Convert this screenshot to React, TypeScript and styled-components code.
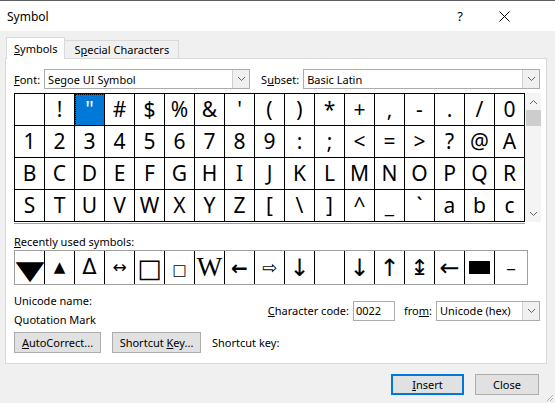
import styled, { createGlobalStyle } from 'styled-components';

const GlobalStyle = createGlobalStyle`
  html, body {
    margin: 0;
    padding: 0;
  }
  body {
    background: #f0f0f0;
    font-family: "Segoe UI", "Noto Sans", sans-serif;
    font-size: 11px;
    color: #000;
  }
`;

const Window = styled.div`
  position: relative;
  width: 555px;
  height: 403px;
  box-sizing: border-box;
  border-top: 1px solid #5f5f5f;
  background: #f0f0f0;
  display: flex;
  flex-direction: column;
  overflow: hidden;
`;

const TitleBar = styled.div`
  height: 30px;
  flex-shrink: 0;
  background: #fff;
  display: flex;
  align-items: center;
  padding-left: 7px;
  padding-right: 28px;
`;

const Title = styled.div`
  flex: 1;
  font-size: 12px;
`;

const TitleButton = styled.div<{ $w: number }>`
  width: ${(p) => p.$w}px;
  height: 30px;
  display: flex;
  align-items: center;
  justify-content: center;
  font-size: 13px;
`;

const Body = styled.div`
  display: flex;
  flex-direction: column;
  padding: 7px 8px 0 5px;
`;

const TabRow = styled.div`
  display: flex;
  align-items: flex-end;
  height: 21px;
  margin-bottom: -1px;
  position: relative;
  z-index: 1;
`;

const Tab = styled.div<{ $active?: boolean }>`
  box-sizing: border-box;
  height: ${(p) => (p.$active ? 22 : 19)}px;
  padding: 0 ${(p) => (p.$active ? 7 : 9)}px;
  display: flex;
  align-items: center;
  background: ${(p) => (p.$active ? '#fff' : '#f0f0f0')};
  border: 1px solid #d9d9d9;
  border-bottom: ${(p) => (p.$active ? 'none' : '1px solid #d9d9d9')};
  border-left: ${(p) => (p.$active ? '1px solid #d9d9d9' : 'none')};
  margin-left: ${(p) => (p.$active ? 1 : 0)}px;
`;

const Panel = styled.div`
  background: #fff;
  border: 1px solid #d9d9d9;
  padding: 10px 6px 10px 8px;
  display: flex;
  flex-direction: column;
`;

const FieldRow = styled.div`
  display: flex;
  align-items: center;
  height: 20px;
`;

const Label = styled.span<{ $lead?: number }>`
  margin-right: 4px;
  margin-left: ${(p) => p.$lead ?? 0}px;
  white-space: nowrap;
`;

const Key = styled.u`
  text-decoration: underline;
  text-underline-offset: 1px;
`;

const Select = styled.div<{ $w: number }>`
  box-sizing: border-box;
  width: ${(p) => p.$w}px;
  height: 20px;
  border: 1px solid #acacac;
  background: #fff;
  display: flex;
  align-items: stretch;
`;

const SelectText = styled.div`
  flex: 1;
  display: flex;
  align-items: center;
  padding-left: 3px;
`;

const SelectButton = styled.div`
  width: 16px;
  border-left: 1px solid #cfcfcf;
  background: #f0f0f0;
  display: flex;
  align-items: center;
  justify-content: center;
`;

const GridArea = styled.div`
  display: flex;
  margin-top: 4px;
`;

const GridFrame = styled.div`
  border-bottom: 1px solid #a0a0a0;
  padding-bottom: 1px;
`;

const Grid = styled.div`
  display: grid;
  grid-template-columns: repeat(17, 30px);
  grid-auto-rows: 32px;
  border-top: 1px solid #000;
  border-left: 1px solid #000;
`;

const Cell = styled.div<{ $selected?: boolean }>`
  box-sizing: border-box;
  border-right: 1px solid #000;
  border-bottom: 1px solid #000;
  display: flex;
  align-items: center;
  justify-content: center;
  font-family: "Segoe UI Symbol", "Noto Sans", "DejaVu Sans", sans-serif;
  font-size: 21px;
  line-height: 1;
  background: ${(p) => (p.$selected ? '#0078d7' : '#fff')};
  color: ${(p) => (p.$selected ? '#fff' : '#000')};
  outline: ${(p) => (p.$selected ? '1px dotted #000' : 'none')};
  outline-offset: -1px;
`;

const Scrollbar = styled.div`
  width: 16px;
  height: 129px;
  background: #f4f4f4;
  display: flex;
  flex-direction: column;
  align-items: center;
`;

const ScrollArrow = styled.div`
  width: 16px;
  height: 17px;
  display: flex;
  align-items: center;
  justify-content: center;
`;

const ScrollTrack = styled.div`
  flex: 1;
  width: 15px;
  margin-left: 1px;
`;

const Thumb = styled.div`
  height: 16px;
  background: #cdcdcd;
`;

const SectionLabel = styled.div`
  margin-top: 9px;
  height: 17px;
  line-height: 17px;
`;

const RecentRow = styled.div`
  display: flex;
  width: 514px;
  height: 35px;
  box-sizing: border-box;
  border: 1px solid #a0a0a0;
`;

const RecentCell = styled.div<{ $size: number; $serif?: boolean; $bold?: boolean; $shift?: number }>`
  box-sizing: border-box;
  width: 30px;
  flex-shrink: 0;
  border-right: 1px solid #000;
  display: flex;
  align-items: center;
  justify-content: center;
  font-family: ${(p) => (p.$serif ? '"Liberation Serif", serif' : '"DejaVu Sans", sans-serif')};
  font-weight: ${(p) => (p.$bold ? 700 : 400)};
  font-size: ${(p) => p.$size}px;
  line-height: 1;
  padding-top: ${(p) => p.$shift ?? 0}px;
  &:last-child {
    flex: 1;
    border-right: none;
  }
`;

const WideGlyph = styled.span<{ $sx: number }>`
  display: inline-block;
  transform: scaleX(${(p) => p.$sx});
`;

const BlockGlyph = styled.span`
  display: block;
  width: 21px;
  height: 13px;
  background: #000;
`;

const InfoRow = styled.div`
  display: flex;
  align-items: center;
  margin-top: 8px;
`;

const InfoText = styled.div`
  display: flex;
  flex-direction: column;
  gap: 3px;
  line-height: 16px;
`;

const CodeGroup = styled.div`
  margin-left: auto;
  display: flex;
  align-items: center;
`;

const Input = styled.div`
  box-sizing: border-box;
  width: 42px;
  height: 20px;
  border: 1px solid #acacac;
  background: #fff;
  display: flex;
  align-items: center;
  padding-left: 2px;
  margin-right: 9px;
`;

const ButtonRow = styled.div`
  display: flex;
  align-items: center;
  gap: 11px;
  margin-top: 4px;
`;

const Button = styled.div<{ $w: number; $default?: boolean }>`
  box-sizing: border-box;
  width: ${(p) => p.$w}px;
  height: 21px;
  display: flex;
  align-items: center;
  justify-content: center;
  background: #e1e1e1;
  border: ${(p) => (p.$default ? '2px solid #0078d7' : '1px solid #adadad')};
  white-space: nowrap;
`;

const Footer = styled.div`
  display: flex;
  justify-content: flex-end;
  gap: 11px;
  margin-top: 10px;
  padding-right: 8px;
`;

const Gripper = styled.svg`
  position: absolute;
  right: 1px;
  bottom: 1px;
`;

const Chevron = ({ up }: { up?: boolean }) => (
  <svg width="9" height="6" viewBox="0 0 9 6">
    <polyline
      points={up ? '1,5 4.5,1.5 8,5' : '1,1 4.5,4.5 8,1'}
      fill="none"
      stroke="#606060"
      strokeWidth="1"
    />
  </svg>
);

const rows = [
  [' ', '!', '"', '#', '$', '%', '&', "'", '(', ')', '*', '+', ',', '-', '.', '/', '0'],
  ['1', '2', '3', '4', '5', '6', '7', '8', '9', ':', ';', '<', '=', '>', '?', '@', 'A'],
  ['B', 'C', 'D', 'E', 'F', 'G', 'H', 'I', 'J', 'K', 'L', 'M', 'N', 'O', 'P', 'Q', 'R'],
  ['S', 'T', 'U', 'V', 'W', 'X', 'Y', 'Z', '[', '\\', ']', '^', '_', '`', 'a', 'b', 'c'],
];

type Recent = { ch: string; size: number; serif?: boolean; bold?: boolean; shift?: number; sx?: number };

const recent: Recent[] = [
  { ch: '▼', size: 26, shift: 4, sx: 1.45 },
  { ch: '▲', size: 15 },
  { ch: 'Δ', size: 21 },
  { ch: '↔', size: 17 },
  { ch: '□', size: 26 },
  { ch: '□', size: 15, shift: 6 },
  { ch: 'W', size: 27, serif: true },
  { ch: '←', size: 20, bold: true },
  { ch: '⇨', size: 18 },
  { ch: '↓', size: 24 },
  { ch: '', size: 20 },
  { ch: '↓', size: 24 },
  { ch: '↑', size: 24 },
  { ch: '↨', size: 22 },
  { ch: '←', size: 24 },
  { ch: 'block', size: 20 },
  { ch: '–', size: 20 },
];

export default function App() {
  return (
    <Window>
      <GlobalStyle />
      <TitleBar>
        <Title>Symbol</Title>
        <TitleButton $w={42}>?</TitleButton>
        <TitleButton $w={46}>
          <svg width="11" height="11" viewBox="0 0 11 11">
            <path d="M0.5 0.5 L10.5 10.5 M10.5 0.5 L0.5 10.5" stroke="#000" strokeWidth="1" />
          </svg>
        </TitleButton>
      </TitleBar>
      <Body>
        <TabRow>
          <Tab $active>
            <span>
              <Key>S</Key>ymbols
            </span>
          </Tab>
          <Tab>
            <span>
              S<Key>p</Key>ecial Characters
            </span>
          </Tab>
        </TabRow>
        <Panel>
          <FieldRow>
            <Label>
              <Key>F</Key>ont:
            </Label>
            <Select $w={207}>
              <SelectText>Segoe UI Symbol</SelectText>
              <SelectButton>
                <Chevron />
              </SelectButton>
            </Select>
            <Label $lead={11}>
              S<Key>u</Key>bset:
            </Label>
            <Select $w={238}>
              <SelectText>Basic Latin</SelectText>
              <SelectButton>
                <Chevron />
              </SelectButton>
            </Select>
          </FieldRow>
          <GridArea>
            <GridFrame>
              <Grid>
                {rows.flat().map((ch, i) => (
                  <Cell key={i} $selected={i === 2}>
                    {ch}
                  </Cell>
                ))}
              </Grid>
            </GridFrame>
            <Scrollbar>
              <ScrollArrow>
                <Chevron up />
              </ScrollArrow>
              <ScrollTrack>
                <Thumb />
              </ScrollTrack>
              <ScrollArrow>
                <Chevron />
              </ScrollArrow>
            </Scrollbar>
          </GridArea>
          <SectionLabel>
            <Key>R</Key>ecently used symbols:
          </SectionLabel>
          <RecentRow>
            {recent.map((r, i) => (
              <RecentCell key={i} $size={r.size} $serif={r.serif} $bold={r.bold} $shift={r.shift}>
                {r.ch === 'block' ? (
                  <BlockGlyph />
                ) : r.sx ? (
                  <WideGlyph $sx={r.sx}>{r.ch}</WideGlyph>
                ) : (
                  r.ch
                )}
              </RecentCell>
            ))}
          </RecentRow>
          <InfoRow>
            <InfoText>
              <span>Unicode name:</span>
              <span>Quotation Mark</span>
            </InfoText>
            <CodeGroup>
              <Label>
                <Key>C</Key>haracter code:
              </Label>
              <Input>0022</Input>
              <Label>
                fro<Key>m</Key>:
              </Label>
              <Select $w={104}>
                <SelectText>Unicode (hex)</SelectText>
                <SelectButton>
                  <Chevron />
                </SelectButton>
              </Select>
            </CodeGroup>
          </InfoRow>
          <ButtonRow>
            <Button $w={87}>
              <span>
                <Key>A</Key>utoCorrect...
              </span>
            </Button>
            <Button $w={89}>
              <span>
                Shortcut <Key>K</Key>ey...
              </span>
            </Button>
            <span>Shortcut key:</span>
          </ButtonRow>
        </Panel>
        <Footer>
          <Button $w={73} $default>
            <span>
              <Key>I</Key>nsert
            </span>
          </Button>
          <Button $w={64}>Close</Button>
        </Footer>
      </Body>
      <Gripper width="8" height="8" viewBox="0 0 8 8">
        <path d="M7 1 L1 7 M7 4 L4 7" stroke="#b0b0b0" strokeWidth="1" />
      </Gripper>
    </Window>
  );
}
